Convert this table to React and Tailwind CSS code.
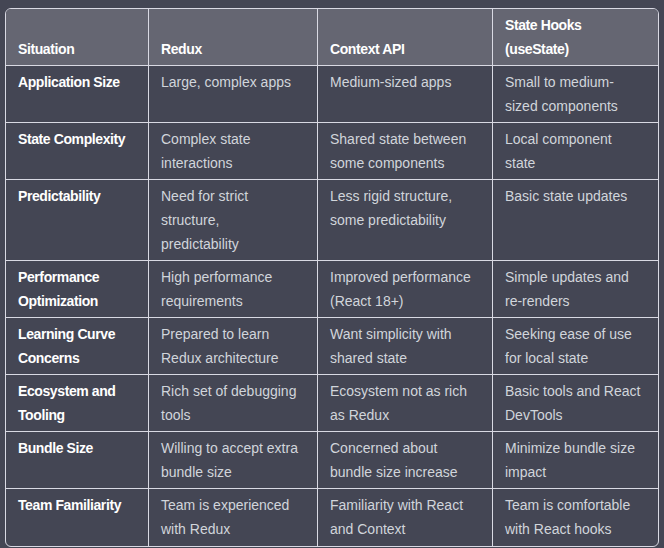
import React from 'react';

// each cell is a list of lines, wrapped as in the reference
const headers = [['Situation'], ['Redux'], ['Context API'], ['State Hooks', '(useState)']];

const rows = [
  [['Application Size'], ['Large, complex apps'], ['Medium-sized apps'], ['Small to medium-', 'sized components']],
  [['State Complexity'], ['Complex state', 'interactions'], ['Shared state between', 'some components'], ['Local component', 'state']],
  [['Predictability'], ['Need for strict', 'structure,', 'predictability'], ['Less rigid structure,', 'some predictability'], ['Basic state updates']],
  [['Performance', 'Optimization'], ['High performance', 'requirements'], ['Improved performance', '(React 18+)'], ['Simple updates and', 're-renders']],
  [['Learning Curve', 'Concerns'], ['Prepared to learn', 'Redux architecture'], ['Want simplicity with', 'shared state'], ['Seeking ease of use', 'for local state']],
  [['Ecosystem and', 'Tooling'], ['Rich set of debugging', 'tools'], ['Ecosystem not as rich', 'as Redux'], ['Basic tools and React', 'DevTools']],
  [['Bundle Size'], ['Willing to accept extra', 'bundle size'], ['Concerned about', 'bundle size increase'], ['Minimize bundle size', 'impact']],
  [['Team Familiarity'], ['Team is experienced', 'with Redux'], ['Familiarity with React', 'and Context'], ['Team is comfortable', 'with React hooks']],
];

const Lines = ({ lines }) => (
  <div>
    {lines.map((l) => (
      <div key={l} className="whitespace-nowrap">{l}</div>
    ))}
  </div>
);

const App = () => {
  return (
    <div
      className="w-[664px] h-[548px] bg-[#444654] pt-2 pl-[5px] text-sm leading-6"
      style={{ fontFamily: '"Liberation Sans", Arial, sans-serif' }}
    >
      <div className="w-[654px] border border-[#d9d9e3] rounded-md overflow-hidden">
        <div className="grid grid-cols-[143px_169px_175px_165px]">
          {/* Header */}
          {headers.map((h, i) => (
            <div
              key={i}
              className={`bg-[#656672] border-b border-[#d9d9e3] px-3 py-1 h-[57px] flex items-end font-bold tracking-[-0.4px] text-white ${
                i < 3 ? 'border-r' : ''
              }`}
            >
              <Lines lines={h} />
            </div>
          ))}

          {/* Body */}
          {rows.map((row, r) =>
            row.map((cell, c) => (
              <div
                key={`${r}-${c}`}
                className={`border-[#d9d9e3] px-3 py-1 min-h-[57px] ${c < 3 ? 'border-r' : ''} ${
                  r < rows.length - 1 ? 'border-b' : ''
                } ${c === 0 ? 'font-bold tracking-[-0.4px] text-white' : 'text-[#d1d5db]'}`}
              >
                <Lines lines={cell} />
              </div>
            ))
          )}
        </div>
      </div>
    </div>
  );
};

export default App;
